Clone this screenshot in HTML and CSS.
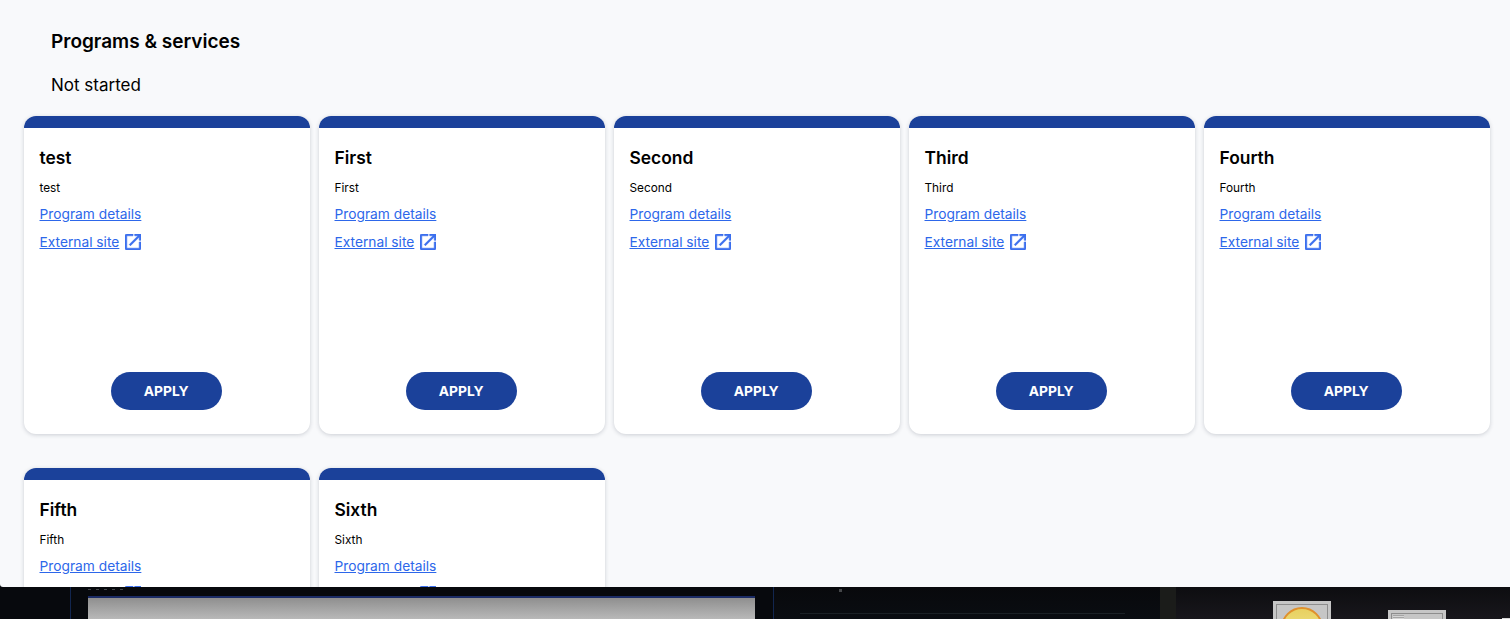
FILE: index.html
```html
<!DOCTYPE html>
<html lang="en">
<head>
<meta charset="utf-8">
<title>Programs &amp; services</title>
<link rel="stylesheet" href="styles.css">
</head>
<body>
<main class="window">
  <h1 class="page-title">Programs &amp; services</h1>
  <h2 class="section-title">Not started</h2>
  <div class="grid">
    <article class="card"><div class="card-bar"></div><div class="card-body"><h3>test</h3><p>test</p><a href="#">Program details</a><div class="ext"><a href="#">External site</a><svg viewBox="3 3 18 18"><path d="M19 19H5V5h7V3H5c-1.110 0-2 .9-2 2v14c0 1.100.89 2 2 2h14c1.100 0 2-.9 2-2v-7h-2v7zM14 3v2h3.590l-9.830 9.830 1.410 1.410L19 6.410V10h2V3h-7z"/></svg></div><div class="actions"><button>APPLY</button></div></div></article>
    <article class="card"><div class="card-bar"></div><div class="card-body"><h3>First</h3><p>First</p><a href="#">Program details</a><div class="ext"><a href="#">External site</a><svg viewBox="3 3 18 18"><path d="M19 19H5V5h7V3H5c-1.110 0-2 .9-2 2v14c0 1.100.89 2 2 2h14c1.100 0 2-.9 2-2v-7h-2v7zM14 3v2h3.590l-9.830 9.830 1.410 1.410L19 6.410V10h2V3h-7z"/></svg></div><div class="actions"><button>APPLY</button></div></div></article>
    <article class="card"><div class="card-bar"></div><div class="card-body"><h3>Second</h3><p>Second</p><a href="#">Program details</a><div class="ext"><a href="#">External site</a><svg viewBox="3 3 18 18"><path d="M19 19H5V5h7V3H5c-1.110 0-2 .9-2 2v14c0 1.100.89 2 2 2h14c1.100 0 2-.9 2-2v-7h-2v7zM14 3v2h3.590l-9.830 9.830 1.410 1.410L19 6.410V10h2V3h-7z"/></svg></div><div class="actions"><button>APPLY</button></div></div></article>
    <article class="card"><div class="card-bar"></div><div class="card-body"><h3>Third</h3><p>Third</p><a href="#">Program details</a><div class="ext"><a href="#">External site</a><svg viewBox="3 3 18 18"><path d="M19 19H5V5h7V3H5c-1.110 0-2 .9-2 2v14c0 1.100.89 2 2 2h14c1.100 0 2-.9 2-2v-7h-2v7zM14 3v2h3.590l-9.830 9.830 1.410 1.410L19 6.410V10h2V3h-7z"/></svg></div><div class="actions"><button>APPLY</button></div></div></article>
    <article class="card"><div class="card-bar"></div><div class="card-body"><h3>Fourth</h3><p>Fourth</p><a href="#">Program details</a><div class="ext"><a href="#">External site</a><svg viewBox="3 3 18 18"><path d="M19 19H5V5h7V3H5c-1.110 0-2 .9-2 2v14c0 1.100.89 2 2 2h14c1.100 0 2-.9 2-2v-7h-2v7zM14 3v2h3.590l-9.830 9.830 1.410 1.410L19 6.410V10h2V3h-7z"/></svg></div><div class="actions"><button>APPLY</button></div></div></article>
    <article class="card"><div class="card-bar"></div><div class="card-body"><h3>Fifth</h3><p>Fifth</p><a href="#">Program details</a><div class="ext"><a href="#">External site</a><svg viewBox="3 3 18 18"><path d="M19 19H5V5h7V3H5c-1.110 0-2 .9-2 2v14c0 1.100.89 2 2 2h14c1.100 0 2-.9 2-2v-7h-2v7zM14 3v2h3.590l-9.830 9.830 1.410 1.410L19 6.410V10h2V3h-7z"/></svg></div><div class="actions"><button>APPLY</button></div></div></article>
    <article class="card"><div class="card-bar"></div><div class="card-body"><h3>Sixth</h3><p>Sixth</p><a href="#">Program details</a><div class="ext"><a href="#">External site</a><svg viewBox="3 3 18 18"><path d="M19 19H5V5h7V3H5c-1.110 0-2 .9-2 2v14c0 1.100.89 2 2 2h14c1.100 0 2-.9 2-2v-7h-2v7zM14 3v2h3.590l-9.830 9.830 1.410 1.410L19 6.410V10h2V3h-7z"/></svg></div><div class="actions"><button>APPLY</button></div></div></article>
  </div>
</main>
<div class="desktop">
  <div class="d-left"><div class="d-specks"></div><div class="d-panel"></div></div>
  <div class="d-mid"><div class="d-speck"></div><div class="d-rule"></div></div>
  <div class="d-sep"></div>
  <div class="d-right">
    <div class="thumb thumb-a"><div class="thumb-inner"><div class="egg"></div></div></div>
    <div class="thumb thumb-b"><div class="thumb-inner"><div class="lines"></div></div></div>
    <div class="corner"></div>
  </div>
</div>
</body>
</html>
```
FILE: styles.css
```css
* { box-sizing: border-box; }
html, body { margin: 0; height: 619px; overflow: hidden; background: #07090d; }
body { font-family: Inter, "Liberation Sans", sans-serif; color: #000; }

.window {
  height: 587px;
  overflow: hidden;
  background: #f8f9fb;
  border-bottom-left-radius: 3px;
  padding: 31px 20px 0 24px;
}
.page-title { margin: 0 0 0 27px; font-size: 19px; line-height: 22px; font-weight: 600; }
.section-title { margin: 21px 0 0 27px; font-size: 17px; line-height: 22px; font-weight: 400; }

.grid {
  display: grid;
  grid-template-columns: repeat(5, 286px);
  column-gap: 9px;
  row-gap: 34px;
  margin-top: 20px;
}
.card {
  height: 318px;
  background: #fff;
  border-radius: 12px;
  box-shadow: 0 1px 4px rgba(30, 41, 59, .2);
  overflow: hidden;
  display: flex;
  flex-direction: column;
}
.card-bar { height: 12px; background: #1b419a; flex: none; }
.card-body { flex: 1; display: flex; flex-direction: column; align-items: flex-start; padding: 19px 16px 24px 15.5px; }
.card-body h3 { margin: 0; font-size: 17.4px; line-height: 22px; font-weight: 600; }
.card-body p { margin: 11px 0 0; font-size: 11.8px; line-height: 16px; }
.card-body a { color: #2d67ea; font-size: 13.75px; line-height: 20px; text-decoration: underline; }
.card-body p + a { margin-top: 8px; }
.ext { display: flex; align-items: center; gap: 6px; margin-top: 8px; height: 20px; }
.ext svg { width: 16px; height: 16px; fill: #3b6fee; stroke: #3b6fee; stroke-width: .7; flex: none; }
.actions { margin-top: auto; align-self: stretch; display: flex; justify-content: center; padding-right: 1px; }
.actions button {
  width: 111px;
  height: 38px;
  border: 0;
  border-radius: 19px;
  background: #1b419a;
  color: #fff;
  font: 700 13.8px/20px Inter, "Liberation Sans", sans-serif;
}

.desktop { height: 32px; display: flex; background: #07090d; overflow: hidden; }
.d-left {
  width: 704px;
  margin-left: 70px;
  flex: none;
  border-left: 1px solid #12264f;
  border-right: 1px solid #12264f;
  padding: 2px 18px 0 17px;
}
.d-specks {
  width: 40px;
  height: 1px;
  background: repeating-linear-gradient(90deg, #45474a 0 3px, #07090d 3px 8px);
}
.d-panel { height: 29px; margin-top: 6px; border-top: 2px solid #1b2c66; background: linear-gradient(#8f8f8f, #c4c4c4); }
.d-mid { width: 386px; flex: none; padding: 2px 35px 0 26px; background: linear-gradient(#08090c, #0a0d12); }
.d-speck { width: 3px; height: 3px; margin-left: 39px; background: #45474a; }
.d-rule { height: 1px; margin-top: 21px; background: #1b2126; }
.d-sep { width: 16px; flex: none; background: #1b1c1a; }
.d-right { flex: 1; background: linear-gradient(#0d0d10, #18171c); display: flex; align-items: flex-start; padding-left: 97px; }
.thumb { width: 58px; height: 40px; padding: 3px; background: #c6c6c6; overflow: hidden; flex: none; }
.thumb-inner { height: 40px; border: 1px solid #8d8d8d; }
.thumb-a { margin-top: 14px; }
.thumb-b { margin-top: 23px; margin-left: 57px; }
.egg { width: 42px; height: 42px; margin: 2px auto 0; border-radius: 50%; border: 2px solid #e0902c; background: linear-gradient(#e8d060, #f0ec9a); }
.lines { width: 11px; height: 6px; margin: 1px 0 0 1px; background: repeating-linear-gradient(#a5a5a5 0 1px, #d6d6d6 1px 2px); }
.corner { width: 8px; height: 1px; margin: 31px 0 0 56px; background: #d8d8d8; flex: none; }
```
